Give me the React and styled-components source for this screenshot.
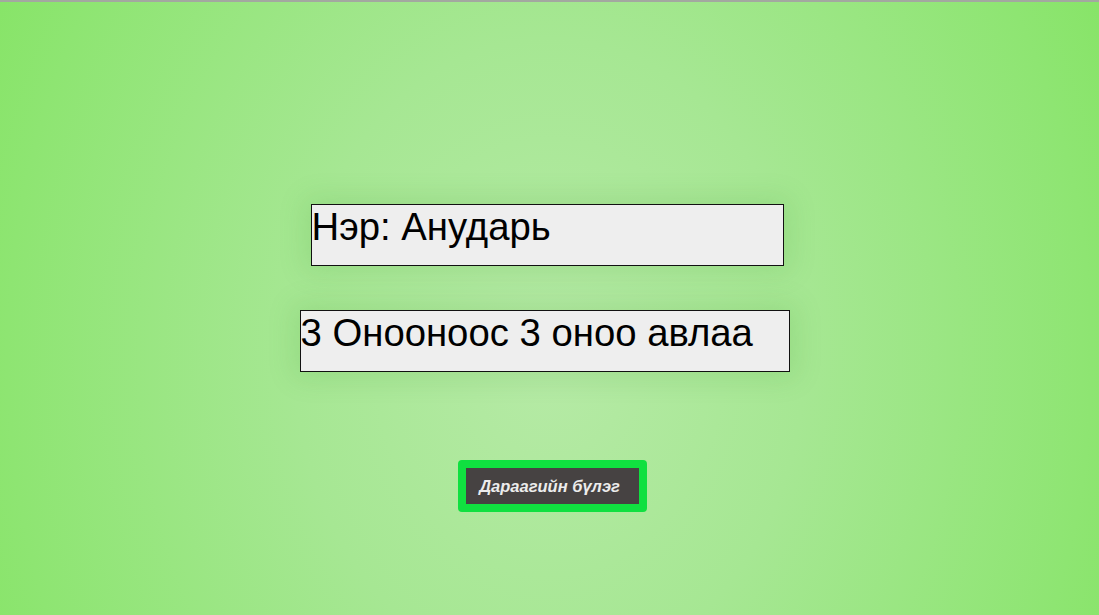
import React from 'react';
import styled, { createGlobalStyle } from 'styled-components';

const GlobalStyle = createGlobalStyle`
  html, body {
    margin: 0;
    padding: 0;
    height: 100%;
  }
  body {
    font-family: "Liberation Sans", Arial, sans-serif;
  }
  #root {
    height: 100%;
  }
`;

// page with the soft green glow
const Page = styled.div`
  box-sizing: border-box;
  height: 100vh;
  border-top: 2px solid #a3a8a0;
  background: radial-gradient(
    ellipse 58% 130% at 50% 58%,
    #b6eaa6 0%,
    #a6e793 40%,
    #8ee572 85%,
    #86e466 100%
  );
  display: flex;
  flex-direction: column;
  align-items: center;
  padding-top: 202px;
`;

const InfoBox = styled.div`
  box-sizing: content-box;
  width: ${(p) => p.$width}px;
  height: 60px;
  margin-right: ${(p) => p.$shift}px;
  margin-bottom: ${(p) => p.$gap}px;
  border: 1px solid #111;
  background: #eeeeee;
  box-shadow: 0 0 28px 6px rgba(40, 140, 20, 0.13);
  font-size: 38.3px;
  line-height: 44px;
  color: #000;
  white-space: nowrap;
`;

const NextButton = styled.button`
  box-sizing: content-box;
  height: 36px;
  margin-left: 6px;
  padding: 0 19px 0 13px;
  border: 8px solid #10e040;
  border-radius: 4px;
  background: #464242;
  color: #ececec;
  font-family: "Liberation Sans", Arial, sans-serif;
  font-size: 16.5px;
  font-weight: bold;
  font-style: italic;
  cursor: pointer;
`;

export default function App() {
  return (
    <>
      <GlobalStyle />
      <Page>
        <InfoBox $width={471} $shift={5} $gap={44}>
          Нэр: Анударь
        </InfoBox>
        <InfoBox $width={488} $shift={10} $gap={88}>
          3 Онооноос 3 оноо авлаа
        </InfoBox>
        <NextButton>Дараагийн бүлэг</NextButton>
      </Page>
    </>
  );
}
